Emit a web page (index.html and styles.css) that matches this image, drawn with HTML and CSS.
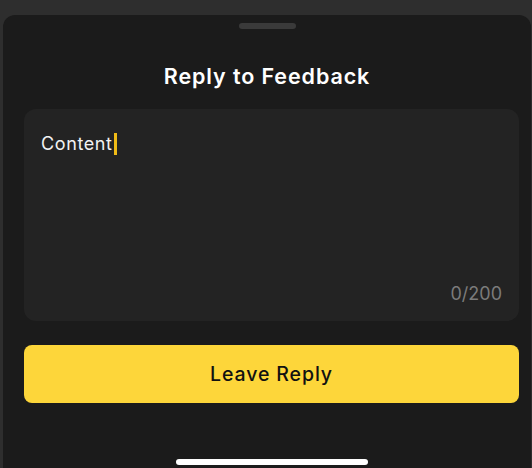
FILE: index.html
```html
<!DOCTYPE html>
<html lang="en">
<head>
<meta charset="utf-8">
<title>Reply to Feedback</title>
<link rel="stylesheet" href="styles.css">
</head>
<body>
<div class="sheet">
  <div class="handle"></div>
  <h1 class="title">Reply to Feedback</h1>
  <div class="content">
    <div class="field">
      <div class="field-text">Content<span class="caret"></span></div>
      <div class="counter">0/200</div>
    </div>
    <button class="submit">Leave Reply</button>
    <div class="home-indicator"></div>
  </div>
</div>
</body>
</html>
```
FILE: styles.css
```css
* { box-sizing: border-box; }
html, body { margin: 0; padding: 0; }
body {
  background: #2e2e2e;
  width: 532px;
  height: 468px;
  overflow: hidden;
  font-family: Inter, "Noto Sans", sans-serif;
  padding-top: 15px;
  padding-left: 3px;
}
.sheet {
  width: 528px;
  height: 453px;
  background: #1b1b1b;
  border-radius: 12px 12px 0 0;
  padding-top: 8px;
  display: flex;
  flex-direction: column;
}
.handle {
  width: 57px;
  height: 6px;
  border-radius: 3px;
  background: #3a3a3a;
  align-self: center;
}
.title {
  margin: 33px 0 0;
  text-align: center;
  color: #ffffff;
  font-size: 21.5px;
  font-weight: 600;
  letter-spacing: 0.9px;
  line-height: 28px;
}
.content {
  padding: 0 12px 0 21px;
  margin-top: 19px;
  display: flex;
  flex-direction: column;
}
.field {
  height: 212px;
  background: #232323;
  border-radius: 12px;
  padding: 23px 17px 15px;
  display: flex;
  flex-direction: column;
  justify-content: space-between;
}
.field-text {
  color: #f2f2f2;
  font-size: 18px;
  letter-spacing: 0.6px;
  line-height: 24px;
  display: flex;
  align-items: center;
}
.caret {
  display: inline-block;
  width: 3px;
  height: 22px;
  background: #f0bb16;
  margin-left: 1px;
}
.counter {
  align-self: flex-end;
  color: #7b7b7b;
  font-size: 18px;
  line-height: 24px;
}
.submit {
  margin-top: 24px;
  height: 58px;
  border: 0;
  border-radius: 8px;
  background: #fdd63a;
  color: #111111;
  font-family: inherit;
  font-size: 19.5px;
  font-weight: 500;
  letter-spacing: 0.9px;
}
.home-indicator {
  margin-top: 56px;
  width: 192px;
  height: 6px;
  border-radius: 3px;
  background: #ffffff;
  align-self: center;
}
```
